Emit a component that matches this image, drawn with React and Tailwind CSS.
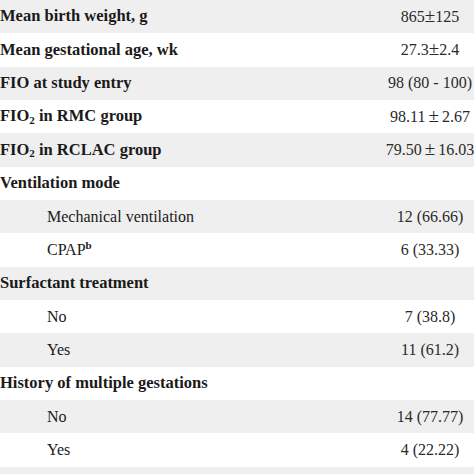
import React from "react";

const rows = [
  { label: "Mean birth weight, g", value: ["865", "125"], tight: true, bold: true },
  { label: "Mean gestational age, wk", value: ["27.3", "2.4"], tight: true, bold: true },
  { label: "FIO at study entry", value: "98 (80 - 100)", bold: true },
  { label: "FIO", sub: "2", rest: " in RMC group", value: ["98.11", "2.67"], bold: true },
  { label: "FIO", sub: "2", rest: " in RCLAC group", value: ["79.50", "16.03"], bold: true },
  { label: "Ventilation mode", value: "", bold: true },
  { label: "Mechanical ventilation", value: "12 (66.66)" },
  { label: "CPAP", sup: "b", value: "6 (33.33)" },
  { label: "Surfactant treatment", value: "", bold: true },
  { label: "No", value: "7 (38.8)" },
  { label: "Yes", value: "11 (61.2)" },
  { label: "History of multiple gestations", value: "", bold: true },
  { label: "No", value: "14 (77.77)" },
  { label: "Yes", value: "4 (22.22)" },
  { label: "", value: "" },
];

const Value = ({ value, tight }) => {
  if (!Array.isArray(value)) return value;
  return (
    <>
      {value[0]}
      <span className={`text-[19px] leading-none ${tight ? "" : "mx-[3px]"}`}>±</span>
      {value[1]}
    </>
  );
};

const App = () => {
  return (
    <div
      className="w-[474px] h-[474px] overflow-hidden bg-white text-[#1a1a1a]"
      style={{ fontFamily: '"Liberation Serif", serif' }}
    >
      {rows.map((row, i) => (
        <div
          key={i}
          className={`grid grid-cols-[370px_120px] h-[33.33px] items-center ${
            i % 2 === 0 ? "bg-[#efefef]" : "bg-white"
          }`}
        >
          <div
            className={`whitespace-nowrap ${
              row.bold ? "font-bold text-[16.5px] pl-0" : "text-[16px] pl-[47px]"
            }`}
          >
            {row.label}
            {row.sub && <sub className="text-[11px]">{row.sub}</sub>}
            {row.rest}
            {row.sup && <sup className="font-bold text-[11px]">{row.sup}</sup>}
          </div>
          <div className="text-center whitespace-nowrap text-[16px] text-[#2a2a2a]">
            <Value value={row.value} tight={row.tight} />
          </div>
        </div>
      ))}
    </div>
  );
};

export default App;
